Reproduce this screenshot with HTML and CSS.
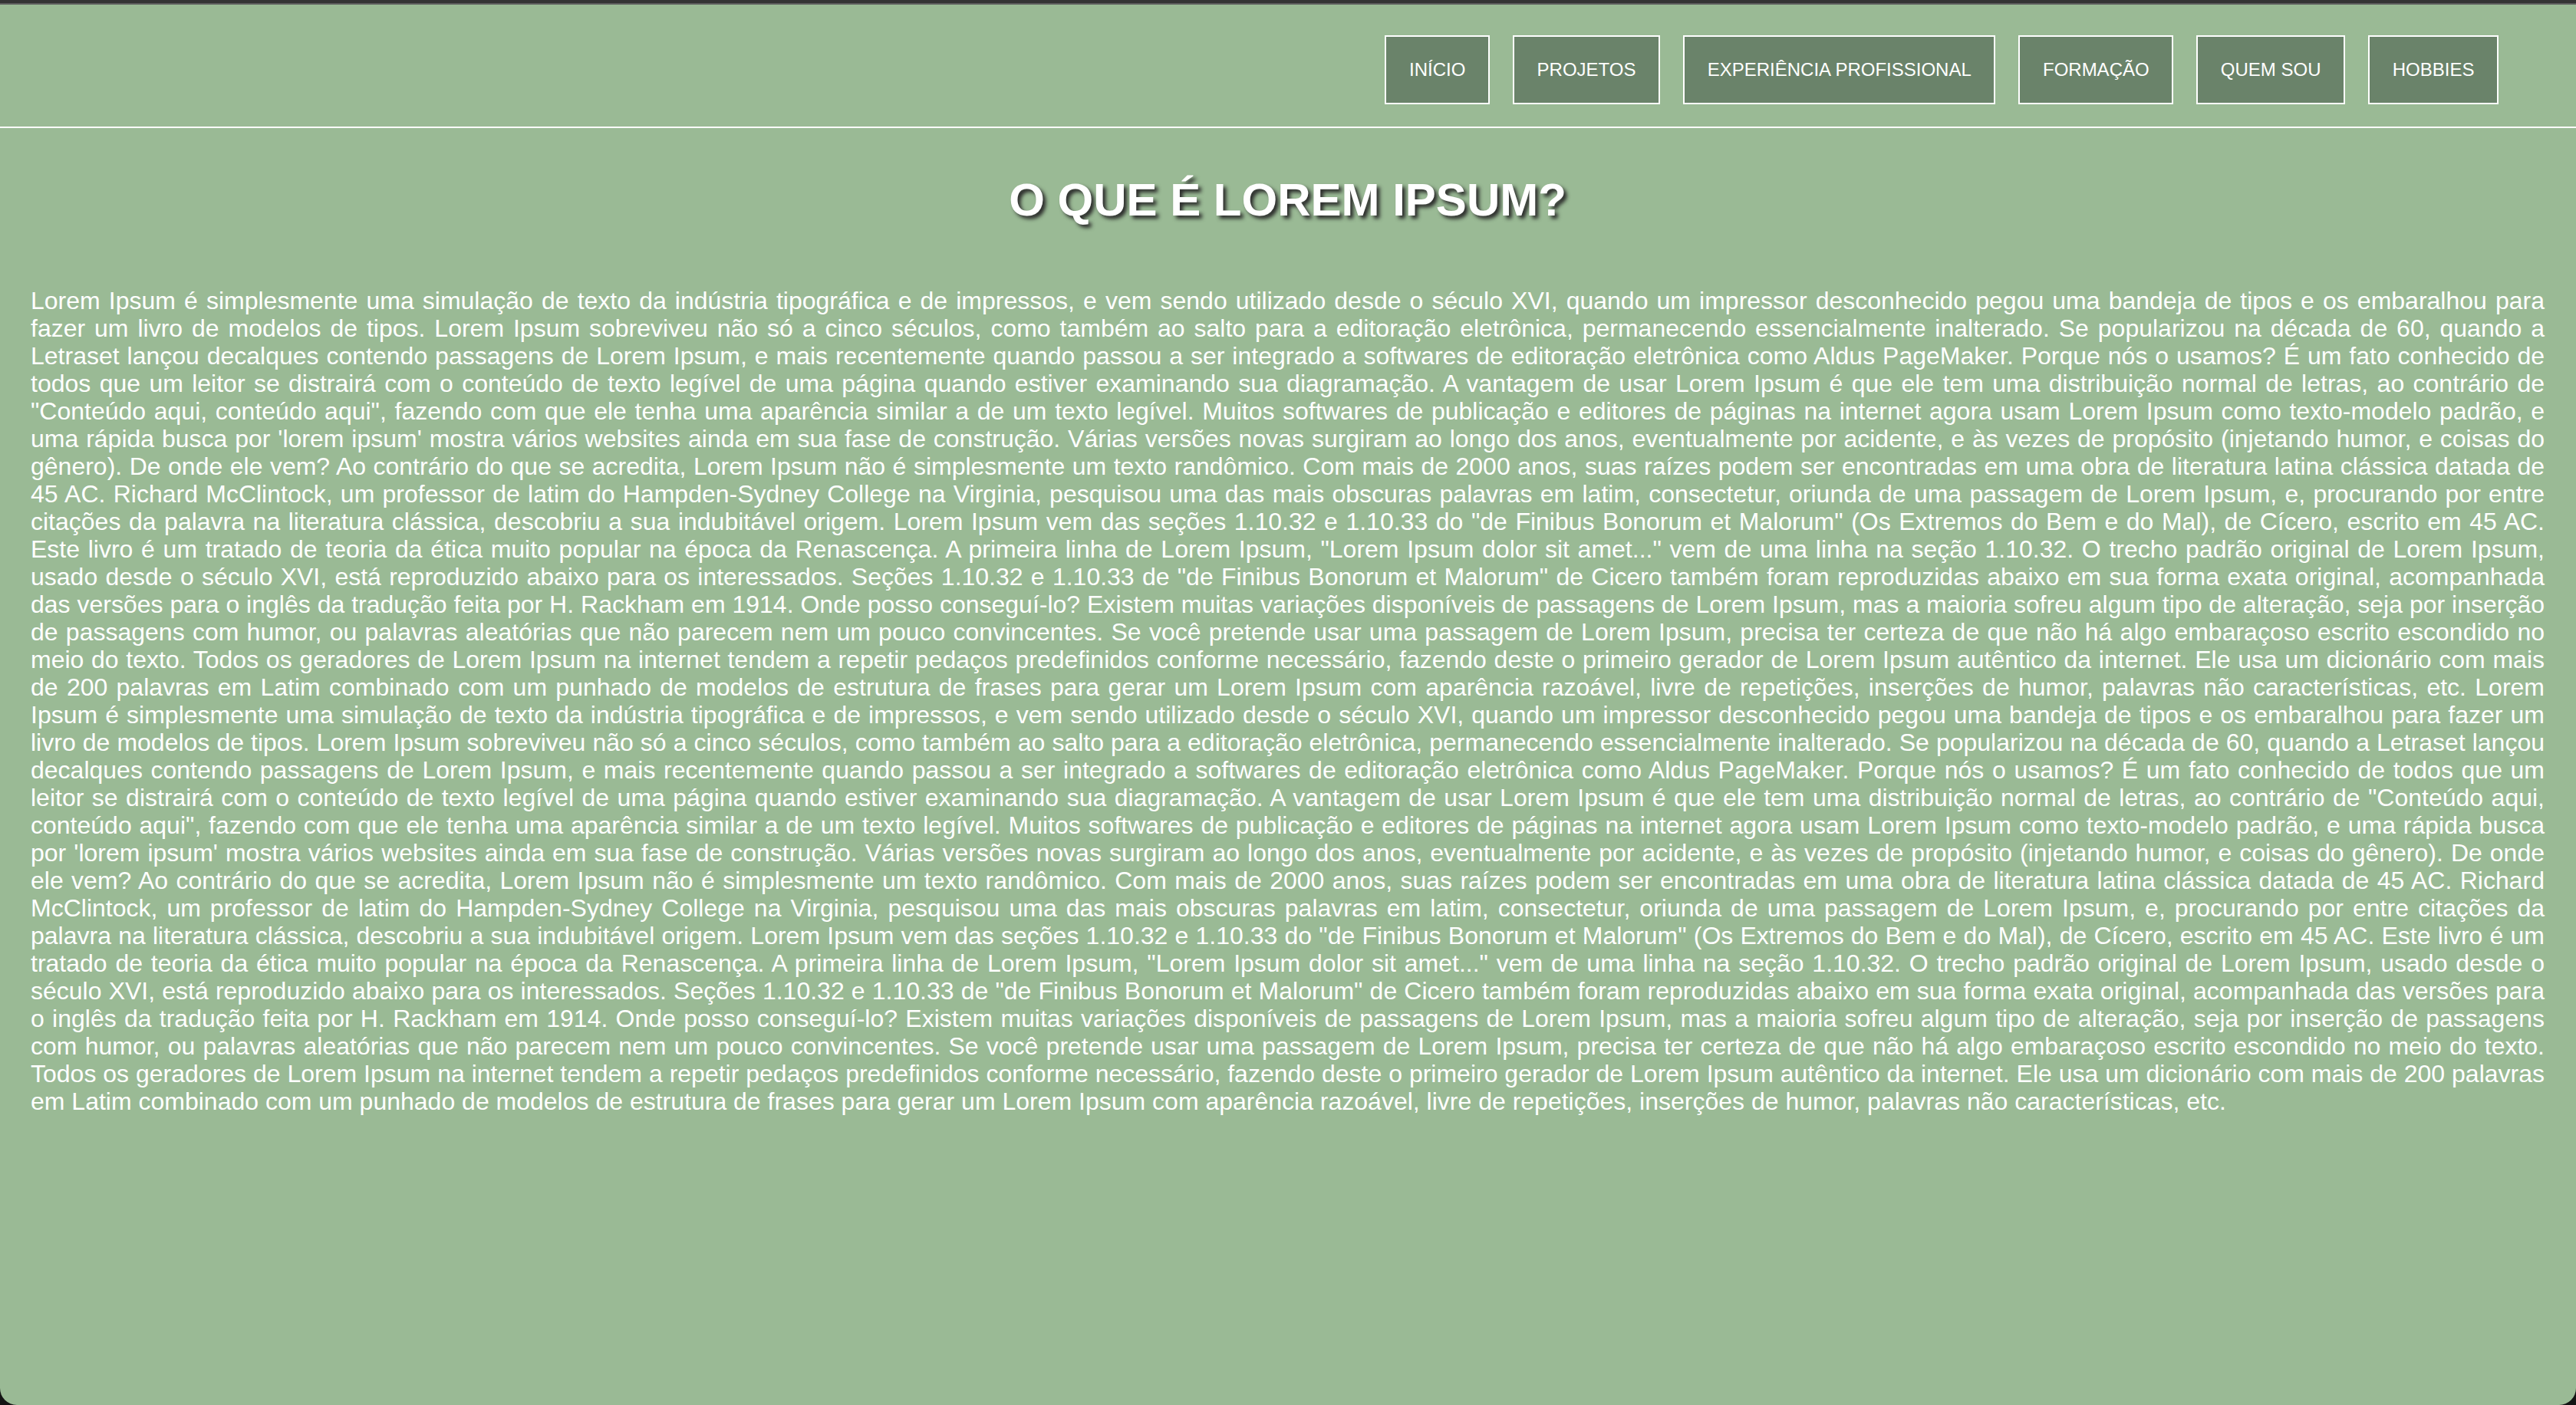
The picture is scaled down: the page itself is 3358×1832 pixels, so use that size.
FILE: index.html
```html
<!DOCTYPE html>
<html lang="pt-BR">
<head>
<meta charset="utf-8">
<title>O que é Lorem Ipsum?</title>
<link rel="stylesheet" href="styles.css">
</head>
<body>
<div class="window">
  <div class="titlebar"></div>
  <div class="page">
    <header class="header">
      <nav class="nav">
        <a class="nav-btn" href="#">INÍCIO</a>
        <a class="nav-btn" href="#">PROJETOS</a>
        <a class="nav-btn" href="#">EXPERIÊNCIA PROFISSIONAL</a>
        <a class="nav-btn" href="#">FORMAÇÃO</a>
        <a class="nav-btn" href="#">QUEM SOU</a>
        <a class="nav-btn" href="#">HOBBIES</a>
      </nav>
    </header>
    <main class="content">
      <h1 class="title">O QUE É LOREM IPSUM?</h1>
      <p class="text">Lorem Ipsum é simplesmente uma simulação de texto da indústria tipográfica e de impressos, e vem sendo utilizado desde o século XVI, quando um impressor desconhecido pegou uma bandeja de tipos e os embaralhou para fazer um livro de modelos de tipos. Lorem Ipsum sobreviveu não só a cinco séculos, como também ao salto para a editoração eletrônica, permanecendo essencialmente inalterado. Se popularizou na década de 60, quando a Letraset lançou decalques contendo passagens de Lorem Ipsum, e mais recentemente quando passou a ser integrado a softwares de editoração eletrônica como Aldus PageMaker. Porque nós o usamos? É um fato conhecido de todos que um leitor se distrairá com o conteúdo de texto legível de uma página quando estiver examinando sua diagramação. A vantagem de usar Lorem Ipsum é que ele tem uma distribuição normal de letras, ao contrário de "Conteúdo aqui, conteúdo aqui", fazendo com que ele tenha uma aparência similar a de um texto legível. Muitos softwares de publicação e editores de páginas na internet agora usam Lorem Ipsum como texto-modelo padrão, e uma rápida busca por 'lorem ipsum' mostra vários websites ainda em sua fase de construção. Várias versões novas surgiram ao longo dos anos, eventualmente por acidente, e às vezes de propósito (injetando humor, e coisas do gênero). De onde ele vem? Ao contrário do que se acredita, Lorem Ipsum não é simplesmente um texto randômico. Com mais de 2000 anos, suas raízes podem ser encontradas em uma obra de literatura latina clássica datada de 45 AC. Richard McClintock, um professor de latim do Hampden-Sydney College na Virginia, pesquisou uma das mais obscuras palavras em latim, consectetur, oriunda de uma passagem de Lorem Ipsum, e, procurando por entre citações da palavra na literatura clássica, descobriu a sua indubitável origem. Lorem Ipsum vem das seções 1.10.32 e 1.10.33 do "de Finibus Bonorum et Malorum" (Os Extremos do Bem e do Mal), de Cícero, escrito em 45 AC. Este livro é um tratado de teoria da ética muito popular na época da Renascença. A primeira linha de Lorem Ipsum, "Lorem Ipsum dolor sit amet..." vem de uma linha na seção 1.10.32. O trecho padrão original de Lorem Ipsum, usado desde o século XVI, está reproduzido abaixo para os interessados. Seções 1.10.32 e 1.10.33 de "de Finibus Bonorum et Malorum" de Cicero também foram reproduzidas abaixo em sua forma exata original, acompanhada das versões para o inglês da tradução feita por H. Rackham em 1914. Onde posso conseguí-lo? Existem muitas variações disponíveis de passagens de Lorem Ipsum, mas a maioria sofreu algum tipo de alteração, seja por inserção de passagens com humor, ou palavras aleatórias que não parecem nem um pouco convincentes. Se você pretende usar uma passagem de Lorem Ipsum, precisa ter certeza de que não há algo embaraçoso escrito escondido no meio do texto. Todos os geradores de Lorem Ipsum na internet tendem a repetir pedaços predefinidos conforme necessário, fazendo deste o primeiro gerador de Lorem Ipsum autêntico da internet. Ele usa um dicionário com mais de 200 palavras em Latim combinado com um punhado de modelos de estrutura de frases para gerar um Lorem Ipsum com aparência razoável, livre de repetições, inserções de humor, palavras não características, etc. Lorem Ipsum é simplesmente uma simulação de texto da indústria tipográfica e de impressos, e vem sendo utilizado desde o século XVI, quando um impressor desconhecido pegou uma bandeja de tipos e os embaralhou para fazer um livro de modelos de tipos. Lorem Ipsum sobreviveu não só a cinco séculos, como também ao salto para a editoração eletrônica, permanecendo essencialmente inalterado. Se popularizou na década de 60, quando a Letraset lançou decalques contendo passagens de Lorem Ipsum, e mais recentemente quando passou a ser integrado a softwares de editoração eletrônica como Aldus PageMaker. Porque nós o usamos? É um fato conhecido de todos que um leitor se distrairá com o conteúdo de texto legível de uma página quando estiver examinando sua diagramação. A vantagem de usar Lorem Ipsum é que ele tem uma distribuição normal de letras, ao contrário de "Conteúdo aqui, conteúdo aqui", fazendo com que ele tenha uma aparência similar a de um texto legível. Muitos softwares de publicação e editores de páginas na internet agora usam Lorem Ipsum como texto-modelo padrão, e uma rápida busca por 'lorem ipsum' mostra vários websites ainda em sua fase de construção. Várias versões novas surgiram ao longo dos anos, eventualmente por acidente, e às vezes de propósito (injetando humor, e coisas do gênero). De onde ele vem? Ao contrário do que se acredita, Lorem Ipsum não é simplesmente um texto randômico. Com mais de 2000 anos, suas raízes podem ser encontradas em uma obra de literatura latina clássica datada de 45 AC. Richard McClintock, um professor de latim do Hampden-Sydney College na Virginia, pesquisou uma das mais obscuras palavras em latim, consectetur, oriunda de uma passagem de Lorem Ipsum, e, procurando por entre citações da palavra na literatura clássica, descobriu a sua indubitável origem. Lorem Ipsum vem das seções 1.10.32 e 1.10.33 do "de Finibus Bonorum et Malorum" (Os Extremos do Bem e do Mal), de Cícero, escrito em 45 AC. Este livro é um tratado de teoria da ética muito popular na época da Renascença. A primeira linha de Lorem Ipsum, "Lorem Ipsum dolor sit amet..." vem de uma linha na seção 1.10.32. O trecho padrão original de Lorem Ipsum, usado desde o século XVI, está reproduzido abaixo para os interessados. Seções 1.10.32 e 1.10.33 de "de Finibus Bonorum et Malorum" de Cicero também foram reproduzidas abaixo em sua forma exata original, acompanhada das versões para o inglês da tradução feita por H. Rackham em 1914. Onde posso conseguí-lo? Existem muitas variações disponíveis de passagens de Lorem Ipsum, mas a maioria sofreu algum tipo de alteração, seja por inserção de passagens com humor, ou palavras aleatórias que não parecem nem um pouco convincentes. Se você pretende usar uma passagem de Lorem Ipsum, precisa ter certeza de que não há algo embaraçoso escrito escondido no meio do texto. Todos os geradores de Lorem Ipsum na internet tendem a repetir pedaços predefinidos conforme necessário, fazendo deste o primeiro gerador de Lorem Ipsum autêntico da internet. Ele usa um dicionário com mais de 200 palavras em Latim combinado com um punhado de modelos de estrutura de frases para gerar um Lorem Ipsum com aparência razoável, livre de repetições, inserções de humor, palavras não características, etc.</p>
    </main>
  </div>
</div>
</body>
</html>
```

FILE: styles.css
```css
html, body {
  margin: 0;
  padding: 0;
  height: 100%;
}

body {
  background: #141414;
  font-family: "Liberation Sans", Arial, sans-serif;
  color: #ffffff;
  overflow: hidden;
}

.window {
  display: flex;
  flex-direction: column;
  height: 1832px;
}

.titlebar {
  height: 4px;
  background: #343434;
  border-bottom: 2px solid #5c5c5c;
  flex: none;
}

.page {
  flex: 1;
  background: #9aba95;
  border-radius: 0 0 22px 22px;
  display: flex;
  flex-direction: column;
}

.header {
  border-bottom: 2px solid #ffffff;
  padding: 40px 101px 29px 40px;
  display: flex;
  justify-content: flex-end;
}

.nav {
  display: flex;
  gap: 30px;
}

.nav-btn {
  display: block;
  background: #6a836a;
  border: 2px solid #ffffff;
  color: #ffffff;
  text-decoration: none;
  font-size: 24px;
  line-height: 28px;
  padding: 29px 29.6px;
  white-space: nowrap;
}

.content {
  padding: 0 41px 0 40px;
}

.title {
  margin: 60px 0 0;
  text-align: center;
  font-size: 60px;
  font-weight: bold;
  line-height: 67px;
  color: #ffffff;
  text-shadow: 4px 4px 5px #2a2a2a;
}

.text {
  margin: 80px 0 0;
  font-size: 32px;
  line-height: 36px;
  text-align: justify;
  color: #ffffff;
}
```
